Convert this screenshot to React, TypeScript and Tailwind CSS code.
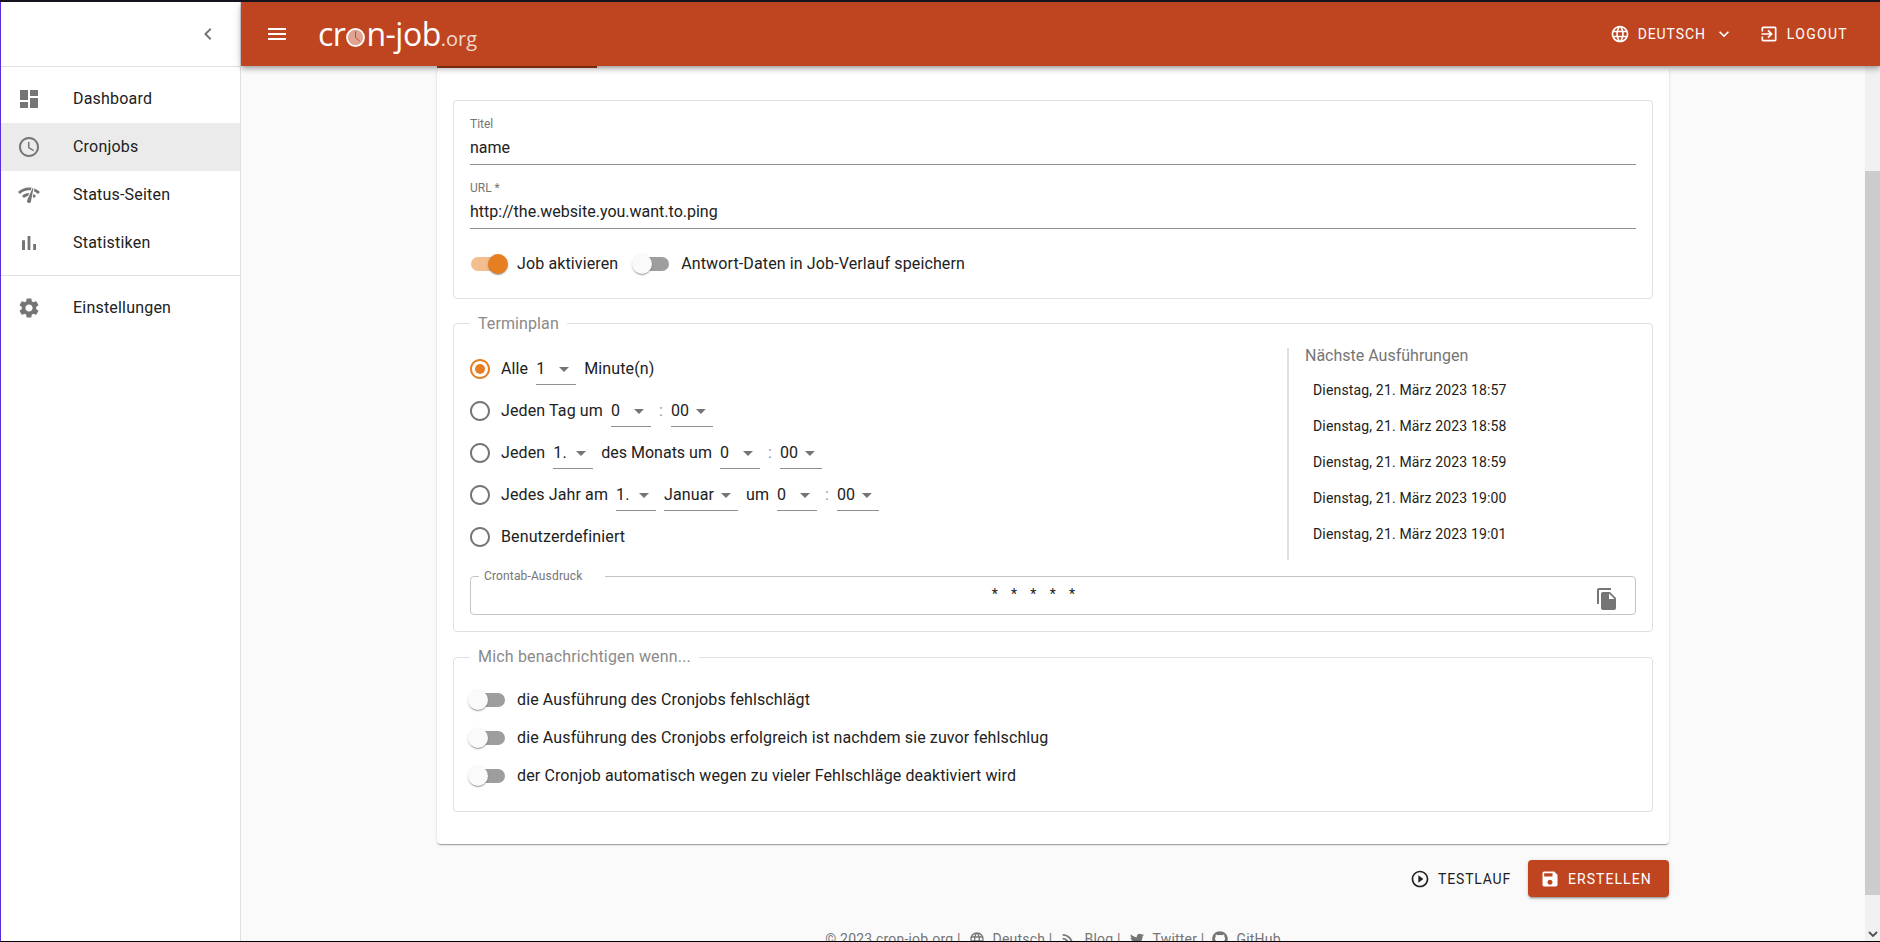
import React from "react";
import { FaGithub } from "react-icons/fa";

const P = {
  dashboard: "M3 13h8V3H3v10zm0 8h8v-6H3v6zm10 0h8V11h-8v10zm0-18v6h8V3h-8z",
  time: "M11.99 2C6.47 2 2 6.48 2 12s4.47 10 9.99 10C17.52 22 22 17.52 22 12S17.52 2 11.99 2zM12 20c-4.42 0-8-3.58-8-8s3.58-8 8-8 8 3.58 8 8-3.58 8-8 8zM12.5 7H11v6l5.25 3.15.75-1.23-4.5-2.67z",
  network: "M15.9 5c-.17 0-.32.09-.41.23l-.07.15-5.18 11.65c-.16.29-.26.61-.26.96 0 1.11.9 2.01 2.01 2.01.96 0 1.77-.68 1.96-1.59l.01-.03L16.4 5.5c0-.28-.22-.5-.5-.5zM1 9l2 2c2.88-2.88 6.79-4.08 10.53-3.62l1.19-2.68C9.89 3.84 4.79 5.21 1 9zm20 2l2-2c-1.64-1.64-3.55-2.82-5.59-3.57l-.53 2.82c1.5.62 2.9 1.53 4.12 2.75zm-4 4l2-2c-.8-.8-1.7-1.42-2.66-1.89l-.55 2.92c.42.27.83.59 1.21.97zM5 13l2 2c1.13-1.13 2.56-1.79 4.03-2l1.28-2.88c-2.63-.08-5.3.87-7.31 2.88z",
  bar: "M5 9.2h3V19H5zM10.6 5h2.8v14h-2.8zm5.6 8H19v6h-2.8z",
  settings: "M19.14 12.94c.04-.3.06-.61.06-.94 0-.32-.02-.64-.07-.94l2.03-1.58c.18-.14.23-.41.12-.61l-1.92-3.32c-.12-.22-.37-.29-.59-.22l-2.39.96c-.5-.38-1.03-.7-1.62-.94l-.36-2.54c-.04-.24-.24-.41-.48-.41h-3.84c-.24 0-.43.17-.47.41l-.36 2.54c-.59.24-1.13.57-1.62.94l-2.39-.96c-.22-.08-.47 0-.59.22L2.74 8.87c-.12.21-.08.47.12.61l2.03 1.58c-.05.3-.09.63-.09.94s.02.64.07.94l-2.03 1.58c-.18.14-.23.41-.12.61l1.92 3.32c.12.22.37.29.59.22l2.39-.96c.5.38 1.03.7 1.62.94l.36 2.54c.05.24.24.41.48.41h3.84c.24 0 .44-.17.47-.41l.36-2.54c.59-.24 1.13-.56 1.62-.94l2.39.96c.22.08.47 0 .59-.22l1.92-3.32c.12-.22.07-.47-.12-.61l-2.01-1.58zM12 15.6c-1.98 0-3.6-1.62-3.6-3.6s1.62-3.6 3.6-3.6 3.6 1.62 3.6 3.6-1.62 3.6-3.6 3.6z",
  menu: "M3 18h18v-2H3v2zm0-5h18v-2H3v2zm0-7v2h18V6H3z",
  chevLeft: "M15.41 7.41L14 6l-6 6 6 6 1.41-1.41L10.83 12z",
  expand: "M16.59 8.59L12 13.17 7.41 8.59 6 10l6 6 6-6z",
  globe: "M11.99 2C6.47 2 2 6.48 2 12s4.47 10 9.99 10C17.52 22 22 17.52 22 12S17.52 2 11.99 2zm6.93 6h-2.95c-.32-1.25-.78-2.45-1.38-3.56 1.84.63 3.37 1.91 4.33 3.56zM12 4.04c.83 1.2 1.48 2.53 1.91 3.96h-3.82c.43-1.43 1.08-2.76 1.91-3.96zM4.26 14C4.1 13.36 4 12.69 4 12s.1-1.36.26-2h3.38c-.08.66-.14 1.32-.14 2 0 .68.06 1.34.14 2H4.26zm.82 2h2.95c.32 1.25.78 2.45 1.38 3.56-1.84-.63-3.37-1.9-4.33-3.56zm2.95-8H5.08c.96-1.66 2.49-2.93 4.33-3.56C8.81 5.55 8.35 6.75 8.03 8zM12 19.96c-.83-1.2-1.48-2.53-1.91-3.96h3.82c-.43 1.43-1.08 2.76-1.91 3.96zM14.34 14H9.66c-.09-.66-.16-1.32-.16-2 0-.68.07-1.35.16-2h4.68c.09.65.16 1.32.16 2 0 .68-.07 1.34-.16 2zm.25 5.56c.6-1.11 1.06-2.31 1.38-3.56h2.95c-.96 1.65-2.49 2.93-4.33 3.56zM16.36 14c.08-.66.14-1.32.14-2 0-.68-.06-1.34-.14-2h3.38c.16.64.26 1.31.26 2s-.1 1.36-.26 2h-3.38z",
  exit: "M10.09 15.59L11.5 17l5-5-5-5-1.41 1.41L12.67 11H3v2h9.67l-2.58 2.59zM19 3H5c-1.11 0-2 .9-2 2v4h2V5h14v14H5v-4H3v4c0 1.1.89 2 2 2h14c1.1 0 2-.9 2-2V5c0-1.1-.9-2-2-2z",
  copy: "M16 1H4c-1.1 0-2 .9-2 2v14h2V3h12V1zm-1 4l6 6v10c0 1.1-.9 2-2 2H7.99C6.89 23 6 22.1 6 21l.01-14c0-1.1.89-2 1.99-2h7zm-1 7h5.5L14 6.5V12z",
  play: "M10 16.5l6-4.5-6-4.5v9zM12 2C6.48 2 2 6.48 2 12s4.48 10 10 10 10-4.48 10-10S17.52 2 12 2zm0 18c-4.41 0-8-3.59-8-8s3.59-8 8-8 8 3.59 8 8-3.59 8-8 8z",
  save: "M17 3H5c-1.11 0-2 .9-2 2v14c0 1.1.89 2 2 2h14c1.1 0 2-.9 2-2V7l-4-4zm-5 16c-1.66 0-3-1.34-3-3s1.34-3 3-3 3 1.34 3 3-1.34 3-3 3zm3-10H5V5h10v4z",
  rss: "M6.18 15.64a2.18 2.18 0 0 1 2.18 2.18C8.36 19 7.38 20 6.18 20C5 20 4 19 4 17.82a2.18 2.18 0 0 1 2.18-2.18M4 4.44A15.56 15.56 0 0 1 19.56 20h-2.83A12.73 12.73 0 0 0 4 7.27V4.44m0 5.66a9.9 9.9 0 0 1 9.9 9.9h-2.83A7.07 7.07 0 0 0 4 12.93V10.1z",
  twitter: "M22.46 6c-.77.35-1.6.58-2.46.69.88-.53 1.56-1.37 1.88-2.38-.83.5-1.75.85-2.72 1.05C18.37 4.5 17.26 4 16 4c-2.35 0-4.27 1.92-4.27 4.29 0 .34.04.67.11.98C8.28 9.09 5.11 7.38 3 4.79c-.37.63-.58 1.37-.58 2.15 0 1.49.75 2.81 1.91 3.56-.71 0-1.37-.2-1.95-.5v.03c0 2.08 1.48 3.82 3.44 4.21a4.22 4.22 0 0 1-1.93.07 4.28 4.28 0 0 0 4 2.98 8.521 8.521 0 0 1-5.33 1.84c-.34 0-.68-.02-1.02-.06C3.44 20.29 5.7 21 8.12 21 16 21 20.33 14.46 20.33 8.79c0-.19 0-.37-.01-.56.84-.6 1.56-1.36 2.14-2.23z",
  radioOff: "M12 2C6.48 2 2 6.48 2 12s4.48 10 10 10 10-4.48 10-10S17.52 2 12 2zm0 18c-4.42 0-8-3.58-8-8s3.58-8 8-8 8 3.58 8 8-3.58 8-8 8z",
};

function Icon({ d, className }: { d: string; className: string }) {
  return (
    <svg viewBox="0 0 24 24" fill="currentColor" className={className}>
      <path d={d} />
    </svg>
  );
}

function NavItem({ icon, label, active }: { icon: string; label: string; active?: boolean }) {
  return (
    <div className={`flex h-12 items-center pl-4 ${active ? "bg-[#ebebeb]" : ""}`}>
      <Icon d={icon} className="h-6 w-6 text-[#757575]" />
      <span className="ml-8 text-base tracking-[0.2px] text-[#212121]">{label}</span>
    </div>
  );
}

function Toggle({ on }: { on?: boolean }) {
  return (
    <span className="relative block h-5 w-10 shrink-0">
      <span className={`absolute left-[3px] top-[3px] h-[14px] w-[34px] rounded-full ${on ? "bg-[#f3bd8e]" : "bg-[#9e9e9e]"}`} />
      <span
        className={`absolute top-0 h-5 w-5 rounded-full shadow-[0_2px_1px_-1px_rgba(0,0,0,.2),0_1px_1px_0_rgba(0,0,0,.14),0_1px_3px_0_rgba(0,0,0,.12)] ${
          on ? "left-5 bg-[#e67e22]" : "left-0 bg-[#fafafa]"
        }`}
      />
    </span>
  );
}

function Select({ value, width }: { value: string; width: string }) {
  return (
    <span className={`flex h-8 items-center justify-between border-b border-[#8f8f8f] ${width}`}>
      <span>{value}</span>
      <Icon d="M7 10l5 5 5-5z" className="h-6 w-6 text-[#757575]" />
    </span>
  );
}

function Colon() {
  return <span className="text-[#9a9a9a]">:</span>;
}

function RadioRow({ checked, children }: { checked?: boolean; children: React.ReactNode }) {
  return (
    <div className="flex h-[42px] items-center text-base tracking-[0.12px] text-[#212121]">
      <svg viewBox="0 0 24 24" fill="currentColor" className={`h-6 w-6 shrink-0 ${checked ? "text-[#e67e22]" : "text-[#757575]"}`}>
        <path d={P.radioOff} />
        {checked && <circle cx="12" cy="12" r="5" />}
      </svg>
      <div className="ml-[9px] flex items-center gap-2">{children}</div>
    </div>
  );
}

function UnderlineField({ label, value }: { label: string; value: string }) {
  return (
    <div>
      <div className="h-[17px] pt-px text-xs leading-4 text-[#757575]">{label}</div>
      <div className="flex h-[33px] items-center border-b border-[#8f8f8f] text-base text-[#212121]">{value}</div>
    </div>
  );
}

function NotifyRow({ label }: { label: string }) {
  return (
    <div className="flex h-[38px] items-center">
      <Toggle />
      <span className="ml-[9px] text-base tracking-[0.12px] text-[#212121]">{label}</span>
    </div>
  );
}

const dates = [
  "Dienstag, 21. März 2023 18:57",
  "Dienstag, 21. März 2023 18:58",
  "Dienstag, 21. März 2023 18:59",
  "Dienstag, 21. März 2023 19:00",
  "Dienstag, 21. März 2023 19:01",
];

export default function App() {
  return (
    <div className="flex h-[942px] w-[1880px] flex-col overflow-hidden border-t-2 border-b border-t-[#15131f] border-b-black bg-white font-['Roboto',sans-serif]">
      <div className="flex min-h-0 flex-1 border-l border-l-[#5a2ee0]">
        <aside className="w-[239px] shrink-0 bg-white">
          <div className="flex h-[65px] items-center justify-end border-b border-[#e0e0e0] pr-5">
            <Icon d={P.chevLeft} className="h-6 w-6 text-[#757575]" />
          </div>
          <nav className="py-2">
            <NavItem icon={P.dashboard} label="Dashboard" />
            <NavItem icon={P.time} label="Cronjobs" active />
            <NavItem icon={P.network} label="Status-Seiten" />
            <NavItem icon={P.bar} label="Statistiken" />
          </nav>
          <div className="border-t border-[#e0e0e0] py-2">
            <NavItem icon={P.settings} label="Einstellungen" />
          </div>
        </aside>

        <div className="flex min-w-0 flex-1 flex-col border-l border-[#e0e0e0]">
          <header className="relative z-10 flex h-16 shrink-0 items-center bg-[#bf4520] pl-6 pr-[32px] text-white shadow-[0_2px_4px_-1px_rgba(0,0,0,.2),0_4px_5px_0_rgba(0,0,0,.14),0_1px_10px_0_rgba(0,0,0,.12)]">
            <Icon d={P.menu} className="h-6 w-6" />
            <div className="ml-[29px] flex items-baseline font-['Open_Sans',sans-serif] text-[32px] font-normal leading-none tracking-[-0.5px]">
              <span>cr</span>
              <svg viewBox="0 0 20 20" className="mx-px mt-[7px] h-[19px] w-[19px] self-center">
                <circle cx="10" cy="10" r="9" fill="#e0a592" stroke="#ffffff" strokeWidth="1.8" />
                <path d="M10 3.5 L10 10 L14.5 14" fill="none" stroke="#bf4520" strokeWidth="1" />
              </svg>
              <span>n-job</span>
              <span className="text-[20px] tracking-normal text-[#f0d8cf]">.org</span>
            </div>
            <div className="ml-auto flex items-center text-sm uppercase">
              <Icon d={P.globe} className="h-5 w-5" />
              <span className="ml-2 tracking-[0.9px]">Deutsch</span>
              <Icon d={P.expand} className="ml-2 h-5 w-5" />
              <Icon d={P.exit} className="ml-[25px] h-5 w-5" />
              <span className="ml-2 tracking-[1.3px]">Logout</span>
            </div>
          </header>

          <div className="flex min-h-0 flex-1">
            <main className="min-w-0 flex-1 overflow-hidden bg-[#fafafa]">
              <div className="mx-auto w-[1232px]">
                <div className="h-[2px] w-[160px] bg-[#a83c1c]" />
                <div className="rounded bg-white px-4 pb-8 pt-8 shadow-[0_2px_1px_-1px_rgba(0,0,0,.2),0_1px_1px_0_rgba(0,0,0,.14),0_1px_3px_0_rgba(0,0,0,.12)]">
                  <section className="h-[199px] rounded border border-[#e0e0e0] px-4 pt-[14px]">
                    <UnderlineField label="Titel" value="name" />
                    <div className="mt-[14px]">
                      <UnderlineField label="URL *" value="http://the.website.you.want.to.ping" />
                    </div>
                    <div className="mt-4 flex h-[38px] items-center text-base tracking-[0.12px] text-[#212121]">
                      <span className="-ml-[2px]">
                        <Toggle on />
                      </span>
                      <span className="ml-[9px]">Job aktivieren</span>
                      <span className="ml-[14px]">
                        <Toggle />
                      </span>
                      <span className="ml-[9px]">Antwort-Daten in Job-Verlauf speichern</span>
                    </div>
                  </section>

                  <fieldset className="mt-[15px] rounded border border-[#e0e0e0] px-4 pb-4">
                    <legend className="ml-0 px-2 text-base leading-[19px] tracking-[0.1px] text-[#8a8a8a]">Terminplan</legend>
                    <div className="mt-[15px] flex h-[212px] items-start">
                      <div className="-ml-[2px] flex-1">
                        <RadioRow checked>
                          <span>Alle</span>
                          <Select value="1" width="w-10" />
                          <span>Minute(n)</span>
                        </RadioRow>
                        <RadioRow>
                          <span>Jeden Tag um</span>
                          <Select value="0" width="w-10" />
                          <Colon />
                          <Select value="00" width="w-[42px]" />
                        </RadioRow>
                        <RadioRow>
                          <span>Jeden</span>
                          <Select value="1." width="w-10" />
                          <span className="tracking-normal">des Monats um</span>
                          <Select value="0" width="w-10" />
                          <Colon />
                          <Select value="00" width="w-[42px]" />
                        </RadioRow>
                        <RadioRow>
                          <span>Jedes Jahr am</span>
                          <Select value="1." width="w-10" />
                          <Select value="Januar" width="w-[74px]" />
                          <span className="tracking-normal">um</span>
                          <Select value="0" width="w-10" />
                          <Colon />
                          <Select value="00" width="w-[42px]" />
                        </RadioRow>
                        <RadioRow>
                          <span>Benutzerdefiniert</span>
                        </RadioRow>
                      </div>
                      <div className="h-[212px] w-[349px] border-l-2 border-[#e0e0e0] pl-4">
                        <div className="mt-px h-[14px] text-base leading-[14px] text-[#757575]">Nächste Ausführungen</div>
                        <div className="mt-[9px]">
                          {dates.map((d) => (
                            <div key={d} className="flex h-9 items-center pl-2 text-sm tracking-[0.16px] text-[#212121]">
                              {d}
                            </div>
                          ))}
                        </div>
                      </div>
                    </div>
                    <fieldset className="mt-[9px] rounded border border-[#c4c4c4]">
                      <legend className="ml-2 pl-[5px] pr-[22px] text-xs leading-[14px] tracking-[0.15px] text-[#757575]">Crontab-Ausdruck</legend>
                      <div className="flex h-[31px] items-center pl-[12px] pr-4">
                        <div className="flex-1 pb-[9px] pl-[2px] text-center text-sm tracking-[13.3px] text-[#212121]">*****</div>
                        <Icon d={P.copy} className="h-6 w-6 text-[#757575]" />
                      </div>
                    </fieldset>
                  </fieldset>

                  <fieldset className="mt-4 h-[164px] rounded border border-[#e0e0e0] px-[14px]">
                    <legend className="ml-[2px] px-2 pb-[2px] text-base leading-[17px] tracking-[0.18px] text-[#8a8a8a]">Mich benachrichtigen wenn...</legend>
                    <div className="mt-[14px]">
                      <NotifyRow label="die Ausführung des Cronjobs fehlschlägt" />
                      <NotifyRow label="die Ausführung des Cronjobs erfolgreich ist nachdem sie zuvor fehlschlug" />
                      <NotifyRow label="der Cronjob automatisch wegen zu vieler Fehlschläge deaktiviert wird" />
                    </div>
                  </fieldset>
                </div>

                <div className="mt-4 flex items-center justify-end text-sm uppercase">
                  <div className="flex items-center text-[#212121]">
                    <Icon d={P.play} className="h-5 w-5" />
                    <span className="ml-2 tracking-[0.8px]">Testlauf</span>
                  </div>
                  <div className="ml-[17px] flex h-[37px] w-[141px] items-center rounded bg-[#bf4520] pl-3 text-white shadow-[0_3px_1px_-2px_rgba(0,0,0,.2),0_2px_2px_0_rgba(0,0,0,.14),0_1px_5px_0_rgba(0,0,0,.12)]">
                    <Icon d={P.save} className="h-5 w-5" />
                    <span className="ml-2 tracking-[1.05px]">Erstellen</span>
                  </div>
                </div>

                <div className="mt-[32px] flex items-center justify-center gap-1 text-sm tracking-[0.2px] text-[#757575]">
                  <span>© 2023 cron-job.org |</span>
                  <Icon d={P.globe} className="mx-1 h-4 w-4" />
                  <span>Deutsch |</span>
                  <Icon d={P.rss} className="mx-1 h-4 w-4" />
                  <span>Blog |</span>
                  <Icon d={P.twitter} className="mx-1 h-4 w-4" />
                  <span>Twitter |</span>
                  <FaGithub className="mx-1 h-4 w-4" />
                  <span>GitHub</span>
                </div>
              </div>
            </main>

            <div className="flex w-[15px] shrink-0 flex-col bg-[#f1f1f1]">
              <div className="mt-[105px] h-[724px] bg-[#cccccc]" />
              <div className="mt-auto flex h-[15px] items-center justify-center">
                <svg viewBox="0 0 10 6" className="h-[6px] w-[10px]">
                  <path d="M1 1l4 4 4-4" fill="none" stroke="#505050" strokeWidth="1.8" />
                </svg>
              </div>
            </div>
          </div>
        </div>
      </div>
    </div>
  );
}
